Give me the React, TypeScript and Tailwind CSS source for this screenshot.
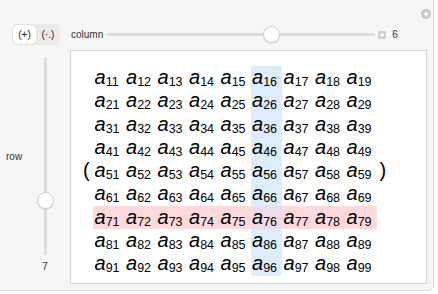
import * as React from 'react'

const ROWS = [1, 2, 3, 4, 5, 6, 7, 8, 9]
const COLS = [1, 2, 3, 4, 5, 6, 7, 8, 9]
const SEL_ROW = 7
const SEL_COL = 6

function cellBg(r: number, c: number) {
  if (r === SEL_ROW && c === SEL_COL) return 'bg-[#ecdcec]'
  if (r === SEL_ROW) return 'bg-[#ffd9dc]'
  if (c === SEL_COL) return 'bg-[#ddedfd]'
  return ''
}

function Entry({r, c}: {r: number; c: number}) {
  return (
    <div className={`h-[23.3px] w-[31.5px] pl-[1.5px] whitespace-nowrap leading-[23.3px] ${cellBg(r, c)}`}>
      <span className="italic text-[20px]">a</span>
      <span className="relative top-[2px] text-[12.5px] leading-none">
        {r}
        {c}
      </span>
    </div>
  )
}

function PlusBadge({className}: {className: string}) {
  return (
    <svg viewBox="0 0 10 10" className={className}>
      <rect x="0" y="0" width="10" height="10" rx="2" fill="#cfcfcf" />
      <path d="M5 2.5v5M2.5 5h5" stroke="#fff" strokeWidth="1.6" />
    </svg>
  )
}

export default function App() {
  return (
    <div className="w-[438px] h-[294px] bg-white relative font-['Liberation_Sans',Arial,sans-serif] text-black">
      <div className="w-[434px] h-[291px] bg-[#f6f6f6] border-r border-b border-[#dedede] rounded-br-[6px] pt-[24px]">
        <svg viewBox="0 0 10 10" className="absolute left-[421px] top-[9px] w-[10px] h-[10px]">
          <circle cx="5" cy="5" r="5" fill="#c6c6c6" />
          <path d="M5 2.5v5M2.5 5h5" stroke="#fff" strokeWidth="1.6" />
        </svg>

        <div className="grid grid-cols-[70px_357px] grid-rows-[21px_234px] gap-y-[5px]">
          <div className="pl-[12px]">
            <div className="flex w-[48px] h-[21px] rounded-[5px] bg-[#ebebeb] p-[1px] gap-[1px] text-[10px] text-[#222]">
              <div className="w-[23px] h-[19px] rounded-[4px] bg-white shadow-[0_0_1px_rgba(0,0,0,0.35)] flex items-center justify-center">
                (+)
              </div>
              <div className="w-[22px] h-[19px] flex items-center justify-center">(·.)</div>
            </div>
          </div>

          <div className="flex items-center pl-[1px] text-[10px] text-[#333]">
            <span>column</span>
            <div className="relative ml-[4px] w-[268px] h-[3px] rounded-full bg-[#dcdcdc]">
              <div className="absolute left-[156px] top-[-7px] w-[17px] h-[17px] rounded-full bg-white border border-[#cfcfcf] shadow-[0_1px_1px_rgba(0,0,0,0.12)]" />
            </div>
            <PlusBadge className="ml-[3px] w-[8px] h-[8px]" />
            <span className="ml-[6px]">6</span>
          </div>

          <div className="flex text-[10px] text-[#333]">
            <div className="w-[30px] pl-[6px] mt-[7px] h-[198px] flex items-center">row</div>
            <div className="flex flex-col items-center w-[30px]">
              <div className="relative mt-[7px] w-[3px] h-[198px] rounded-full bg-[#dcdcdc]">
                <div className="absolute left-[-7px] top-[135px] w-[17px] h-[17px] rounded-full bg-white border border-[#cfcfcf] shadow-[0_1px_1px_rgba(0,0,0,0.12)]" />
              </div>
              <span className="mt-[4px]">7</span>
            </div>
          </div>

          <div className="bg-white border border-[#d4d4d4] pt-[15px] pl-[12px]">
            {ROWS.map(r => (
              <div key={r} className="flex">
                <div className="w-[10px] h-[23.3px] leading-[23.3px] text-[20px]">{r === 5 ? '(' : ''}</div>
                {COLS.map(c => (
                  <Entry key={c} r={r} c={c} />
                ))}
                <div className="w-[10px] h-[23.3px] leading-[23.3px] text-[20px] pl-[3px]">{r === 5 ? ')' : ''}</div>
              </div>
            ))}
          </div>
        </div>
      </div>
    </div>
  )
}
